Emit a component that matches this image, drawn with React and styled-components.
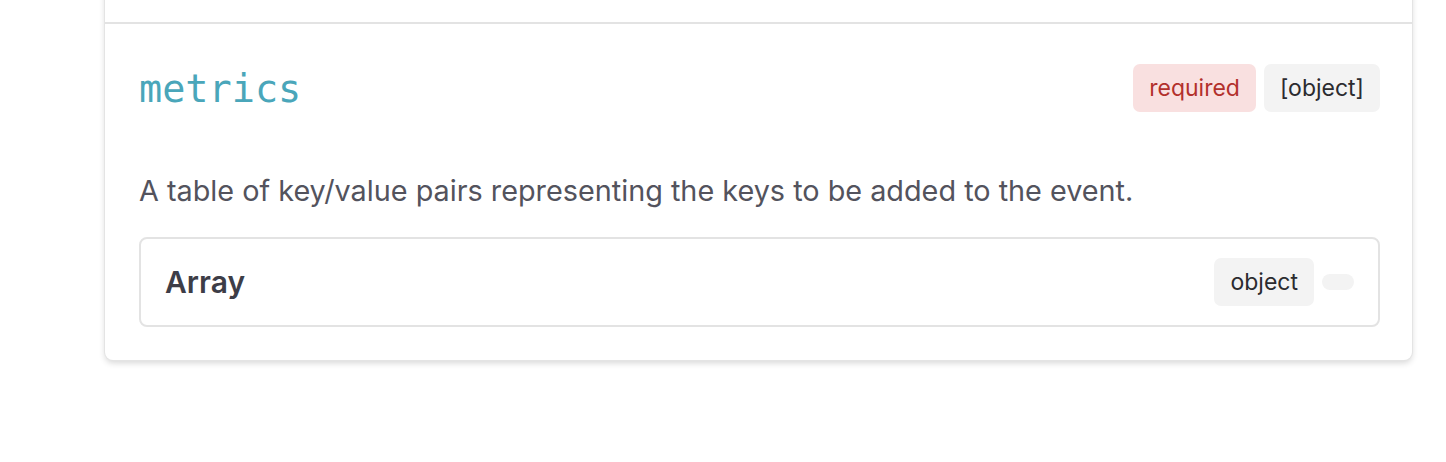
import React from 'react';
import styled, { createGlobalStyle } from 'styled-components';

const GlobalStyle = createGlobalStyle`
  html, body {
    margin: 0;
    padding: 0;
    background: #ffffff;
    font-family: Inter, "Noto Sans", "Liberation Sans", sans-serif;
  }
`;

const Page = styled.div`
  width: 1446px;
  height: 462px;
  overflow: hidden;
  padding-left: 105px;
  box-sizing: border-box;
`;

const Card = styled.div`
  width: 1307px;
  margin-top: -40px;
  background: #ffffff;
  border-radius: 8px;
  box-shadow: 0 0 0 1px #e4e4e4, 0 3px 6px rgba(0, 0, 0, 0.16);
`;

const TopSection = styled.div`
  height: 62px;
  border-bottom: 2px solid #e3e3e3;
`;

const Field = styled.div`
  padding: 40px 32px 33px 34px;
`;

const FieldHeader = styled.div`
  display: flex;
  align-items: center;
  justify-content: space-between;
  height: 48px;
`;

const FieldName = styled.span`
  font-family: "DejaVu Sans Mono", "Liberation Mono", monospace;
  font-size: 38.5px;
  color: #4aa6ba;
`;

const Badges = styled.div`
  display: flex;
  align-items: center;
  gap: 8px;
`;

const Badge = styled.span`
  display: inline-flex;
  align-items: center;
  height: 48px;
  padding: 0 16px;
  border-radius: 7px;
  font-size: 23px;
  background: ${p => (p.$tone === 'danger' ? '#f9e0e0' : '#f3f3f3')};
  color: ${p => (p.$tone === 'danger' ? '#b3302c' : '#2b2b2f')};
`;

const Dot = styled.span`
  width: 32px;
  height: 16px;
  border-radius: 8px;
  background: #f3f3f3;
`;

const Description = styled.p`
  margin: 61px 0 28px;
  font-size: 28.8px;
  line-height: 36px;
  color: #53535d;
`;

const TypeBox = styled.div`
  display: flex;
  align-items: center;
  justify-content: space-between;
  height: 86px;
  padding: 0 24px;
  border: 2px solid #e3e3e3;
  border-radius: 8px;
`;

const TypeName = styled.span`
  font-size: 30px;
  font-weight: 600;
  color: #3d3d47;
`;

export default function App() {
  return (
    <Page>
      <GlobalStyle />
      <Card>
        <TopSection />
        <Field>
          <FieldHeader>
            <FieldName>metrics</FieldName>
            <Badges>
              <Badge $tone="danger">required</Badge>
              <Badge>[object]</Badge>
            </Badges>
          </FieldHeader>
          <Description>
            A table of key/value pairs representing the keys to be added to the event.
          </Description>
          <TypeBox>
            <TypeName>Array</TypeName>
            <Badges>
              <Badge>object</Badge>
              <Dot />
            </Badges>
          </TypeBox>
        </Field>
      </Card>
    </Page>
  );
}
